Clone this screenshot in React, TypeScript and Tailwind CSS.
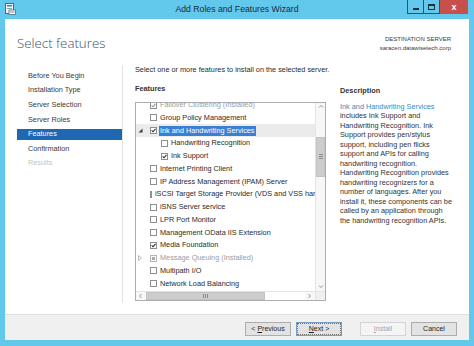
import React from "react";

type Feature = {
  name: string;
  level: 0 | 1;
  state: "on" | "off" | "grayOn" | "partial";
  arrow?: "open" | "closed";
  disabled?: boolean;
  selected?: boolean;
};

const steps = [
  "Before You Begin",
  "Installation Type",
  "Server Selection",
  "Server Roles",
  "Features",
  "Confirmation",
  "Results",
];

const features: Feature[] = [
  { name: "Failover Clustering (Installed)", level: 0, state: "grayOn", disabled: true },
  { name: "Group Policy Management", level: 0, state: "off" },
  { name: "Ink and Handwriting Services", level: 0, state: "on", arrow: "open", selected: true },
  { name: "Handwriting Recognition", level: 1, state: "off" },
  { name: "Ink Support", level: 1, state: "on" },
  { name: "Internet Printing Client", level: 0, state: "off" },
  { name: "IP Address Management (IPAM) Server", level: 0, state: "off" },
  { name: "iSCSI Target Storage Provider (VDS and VSS hardware providers)", level: 0, state: "off" },
  { name: "iSNS Server service", level: 0, state: "off" },
  { name: "LPR Port Monitor", level: 0, state: "off" },
  { name: "Management OData IIS Extension", level: 0, state: "off" },
  { name: "Media Foundation", level: 0, state: "on" },
  { name: "Message Queuing (Installed)", level: 0, state: "partial", arrow: "closed", disabled: true },
  { name: "Multipath I/O", level: 0, state: "off" },
  { name: "Network Load Balancing", level: 0, state: "off" },
  { name: "Peer Name Resolution Protocol", level: 0, state: "off" },
];

const description = [
  "includes Ink Support and",
  "Handwriting Recognition. Ink",
  "Support provides pen/stylus",
  "support, including pen flicks",
  "support and APIs for calling",
  "handwriting recognition.",
  "Handwriting Recognition provides",
  "handwriting recognizers for a",
  "number of languages. After you",
  "install it, these components can be",
  "called by an application through",
  "the handwriting recognition APIs.",
];

const Checkbox = ({ state }: { state: Feature["state"] }) => {
  if (state === "partial") {
    return (
      <div className="w-[7px] h-[7px] border border-[#b4b4b4] bg-white p-[1px]">
        <div className="w-full h-full bg-[#a8a8a8]" />
      </div>
    );
  }
  return (
    <div className="w-[7px] h-[7px] border border-[#8e8f8f] bg-white flex items-center justify-center">
      {(state === "on" || state === "grayOn") && (
        <svg width="5" height="5" viewBox="0 0 5 5">
          <path
            d="M0.6 2.4 L2 3.8 L4.5 0.8"
            fill="none"
            stroke={state === "on" ? "#2b2b2b" : "#9a9a9a"}
            strokeWidth="1.1"
          />
        </svg>
      )}
    </div>
  );
};

const Arrow = ({ kind }: { kind?: "open" | "closed" }) => {
  if (kind === "open") {
    return (
      <svg width="5" height="5" viewBox="0 0 5 5">
        <path d="M4.5 0.5 L4.5 4.5 L0.5 4.5 Z" fill="#3c3c3c" />
      </svg>
    );
  }
  if (kind === "closed") {
    return (
      <svg width="4" height="6" viewBox="0 0 4 6">
        <path d="M0.5 0.5 L3.5 3 L0.5 5.5 Z" fill="none" stroke="#a6a6a6" strokeWidth="0.8" />
      </svg>
    );
  }
  return null;
};

const Chevron = ({ dir }: { dir: "up" | "down" | "left" | "right" }) => {
  const d = {
    up: "M1 3.5 L3 1.5 L5 3.5",
    down: "M1 1.5 L3 3.5 L5 1.5",
    left: "M3.5 1 L1.5 3 L3.5 5",
    right: "M1.5 1 L3.5 3 L1.5 5",
  }[dir];
  return (
    <svg width="6" height="6" viewBox="0 0 6 6">
      <path d={d} fill="none" stroke="#8a8a8a" strokeWidth="0.9" />
    </svg>
  );
};

const Btn = ({
  label,
  u,
  rest,
  disabled,
  focused,
}: {
  label?: string;
  u?: string;
  rest?: string;
  disabled?: boolean;
  focused?: boolean;
}) => (
  <div
    className={`w-[46px] h-[14px] border flex items-center justify-center text-[7px] ${
      disabled
        ? "border-[#d4d4d4] bg-[#f4f4f4] text-[#a3a3a3]"
        : focused
        ? "border-[#7a9cc0] bg-[#e3e3e3] text-[#1e1e1e]"
        : "border-[#adadad] bg-[#e3e3e3] text-[#1e1e1e]"
    }`}
  >
    <div
      className={`flex items-center justify-center w-full h-full ${
        focused ? "border border-dotted border-[#6f6f6f]" : ""
      }`}
    >
      <span className="whitespace-pre">
        {label}
        {u && <span className="underline">{u}</span>}
        {rest}
      </span>
    </div>
  </div>
);

export default function App() {
  return (
    <div className="w-[474px] h-[346px] bg-[#62c9ec] flex flex-col overflow-hidden font-['Liberation_Sans',Arial,sans-serif]">
      {/* title bar */}
      <div className="h-[19px] grid grid-cols-[1fr_auto_1fr] shrink-0">
        <div className="pl-[5px] pt-[3px]">
          <svg width="11" height="12" viewBox="0 0 11 12">
            <rect x="0.5" y="0.5" width="8" height="10" fill="#f4f8fb" stroke="#4b6a80" />
            <rect x="2" y="2" width="5" height="1.5" fill="#2f7fc0" />
            <rect x="2" y="5" width="5" height="1" fill="#8aa0b0" />
            <rect x="4" y="7" width="6.5" height="4.5" fill="#ffffff" stroke="#4b6a80" strokeWidth="0.8" />
            <rect x="5" y="8.5" width="4.5" height="1" fill="#6f8fa6" />
          </svg>
        </div>
        <div className="text-[8.7px] leading-[19px] text-[#1b2a3a] whitespace-nowrap">
          Add Roles and Features Wizard
        </div>
        <div className="flex justify-end pr-[6px]">
          <div className="flex h-[14px] border-l border-b border-[#2e5566]">
            <div className="w-[16px] flex items-end justify-center pb-[3px] border-r border-[#2e5566]">
              <div className="w-[6px] h-[2px] bg-[#1f2f38]" />
            </div>
            <div className="w-[16px] flex items-center justify-center border-r border-[#2e5566]">
              <div className="w-[7px] h-[6px] border border-t-2 border-[#1f2f38]" />
            </div>
          </div>
          <div className="w-[28px] h-[14px] bg-[#c7504a] flex items-center justify-center text-white text-[9px] font-bold leading-none">
            x
          </div>
        </div>
      </div>

      {/* window body */}
      <div className="flex-1 mx-[5px] bg-white flex flex-col min-h-0">
        {/* header */}
        <div className="h-[43px] shrink-0 flex justify-between pl-[12px] pr-[18px]">
          <div className="pt-[16px] text-[13.3px] leading-[17px] font-light text-[#3e5263] font-['Open_Sans',sans-serif]">
            Select features
          </div>
          <div className="pt-[15.5px] text-right text-[6px] leading-[9px] text-[#3b3b3b]">
            <div>DESTINATION SERVER</div>
            <div>saracen.datawisetech.corp</div>
          </div>
        </div>

        {/* content */}
        <div className="flex flex-1 min-h-0">
          <nav className="w-[105px] ml-[12px] pt-[8.5px] shrink-0">
            {steps.map((s) => (
              <div
                key={s}
                className={`h-[11.6px] mb-[3px] flex items-center pl-[11px] text-[7.3px] whitespace-nowrap ${
                  s === "Features"
                    ? "bg-[#1e67b3] text-white"
                    : s === "Results"
                    ? "text-[#c4c4c4]"
                    : "text-[#3a3a3a]"
                }`}
              >
                {s}
              </div>
            ))}
          </nav>
          <div className="w-px bg-[#e2e2e2] mt-[3px] mb-[11px] shrink-0" />

          <main className="flex-1 pl-[12px] pt-[3px] text-[7.3px] text-[#2a2a2a]">
            <div className="leading-[9.4px] whitespace-nowrap">
              Select one or more features to install on the selected server.
            </div>
            <div className="flex mt-[10px]">
              <div className="w-[191px] shrink-0">
                <div className="leading-[9.4px] font-bold text-[#333]">Features</div>
                <div className="mt-[8px] h-[199px] border border-[#abadb3] flex flex-col">
                  <div className="flex flex-1 min-h-0">
                    <div className="flex-1 overflow-hidden">
                      <div className="-mt-[4.2px]">
                        {features.map((f) => (
                          <div
                            key={f.name}
                            className={`h-[12.77px] flex items-center whitespace-nowrap ${
                              f.selected ? "bg-[#ebebeb]" : ""
                            }`}
                          >
                            <div className={f.level === 1 ? "w-[13px] shrink-0" : "w-[2px] shrink-0"} />
                            <div className="w-[9px] shrink-0 flex items-center">
                              {f.level === 0 && <Arrow kind={f.arrow} />}
                            </div>
                            <div className="w-[3px] shrink-0" />
                            <Checkbox state={f.state} />
                            <div
                              className={`ml-[2px] px-[1px] leading-[10px] ${
                                f.selected
                                  ? "bg-[#3a7fd4] text-white"
                                  : f.disabled
                                  ? "text-[#9c9c9c]"
                                  : "text-[#2a2a2a]"
                              }`}
                            >
                              {f.name}
                            </div>
                          </div>
                        ))}
                      </div>
                    </div>
                    {/* vertical scrollbar */}
                    <div className="w-[10px] shrink-0 bg-[#f7f7f7] border-l border-[#e4e4e4] flex flex-col items-center">
                      <div className="h-[8px] flex items-center">
                        <Chevron dir="up" />
                      </div>
                      <div className="h-[26px]" />
                      <div className="w-[9px] h-[40px] bg-[#cdcdcd] border border-[#c2c2c2] flex items-center justify-center">
                        <div className="w-[4px] flex flex-col gap-[1px]">
                          <div className="h-px bg-[#8c8c8c]" />
                          <div className="h-px bg-[#8c8c8c]" />
                          <div className="h-px bg-[#8c8c8c]" />
                        </div>
                      </div>
                      <div className="flex-1" />
                      <div className="h-[8px] flex items-center">
                        <Chevron dir="down" />
                      </div>
                    </div>
                  </div>
                  {/* horizontal scrollbar */}
                  <div className="h-[9px] shrink-0 flex border-t border-[#e4e4e4] bg-[#f7f7f7]">
                    <div className="w-[10px] flex items-center justify-center">
                      <Chevron dir="left" />
                    </div>
                    <div className="w-[119px] bg-[#cdcdcd] border border-[#c2c2c2] flex items-center justify-center gap-[1px]">
                      <div className="w-px h-[4px] bg-[#8c8c8c]" />
                      <div className="w-px h-[4px] bg-[#8c8c8c]" />
                      <div className="w-px h-[4px] bg-[#8c8c8c]" />
                    </div>
                    <div className="flex-1 bg-white" />
                    <div className="w-[10px] flex items-center justify-center">
                      <Chevron dir="right" />
                    </div>
                    <div className="w-[10px] bg-[#f0f0f0] border-l border-[#e4e4e4]" />
                  </div>
                </div>
              </div>

              <div className="ml-[14px] pt-[2px] whitespace-nowrap leading-[9.5px]">
                <div className="font-bold text-[#333]">Description</div>
                <div className="mt-[6px] text-[#3a8ac0]">Ink and Handwriting Services</div>
                {description.map((l) => (
                  <div key={l} className="text-[#333]">
                    {l}
                  </div>
                ))}
              </div>
            </div>
          </main>
        </div>

        {/* footer */}
        <div className="h-[26px] shrink-0 bg-[#f0f0f0] border-t border-[#dfdfdf] flex justify-end items-start pt-[7px] pr-[12px]">
          <Btn label="< " u="P" rest="revious" />
          <div className="w-[5px]" />
          <Btn u="N" rest="ext >" focused />
          <div className="w-[18px]" />
          <Btn u="I" rest="nstall" disabled />
          <div className="w-[5px]" />
          <Btn label="Cancel" />
        </div>
      </div>
      <div className="h-[6px] shrink-0" />
    </div>
  );
}
